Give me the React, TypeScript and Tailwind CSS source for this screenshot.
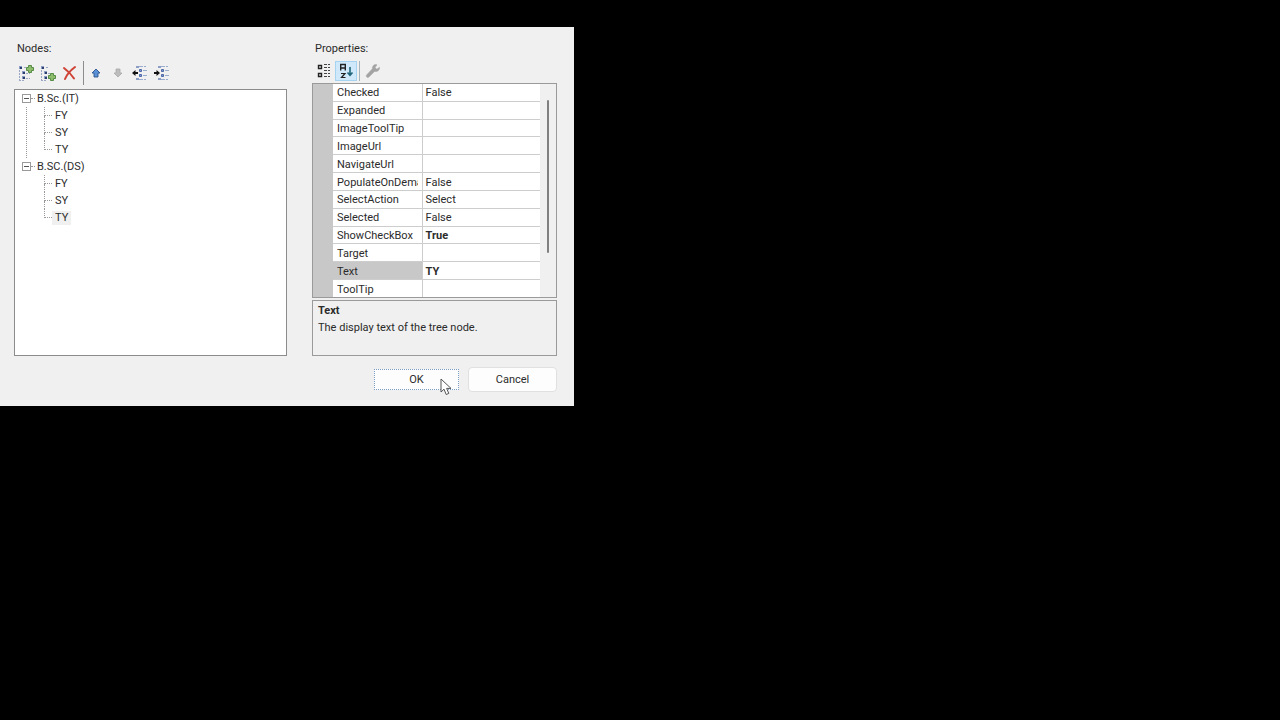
import React from 'react';
import clsx from 'clsx';

interface TreeItem {
  label: string;
  children: string[];
}

interface Property {
  name: string;
  value: string;
  changed?: boolean;
}

const tree: TreeItem[] = [
  { label: 'B.Sc.(IT)', children: ['FY', 'SY', 'TY'] },
  { label: 'B.SC.(DS)', children: ['FY', 'SY', 'TY'] },
];

const properties: Property[] = [
  { name: 'Checked', value: 'False' },
  { name: 'Expanded', value: '' },
  { name: 'ImageToolTip', value: '' },
  { name: 'ImageUrl', value: '' },
  { name: 'NavigateUrl', value: '' },
  { name: 'PopulateOnDemand', value: 'False' },
  { name: 'SelectAction', value: 'Select' },
  { name: 'Selected', value: 'False' },
  { name: 'ShowCheckBox', value: 'True', changed: true },
  { name: 'Target', value: '' },
  { name: 'Text', value: 'TY', changed: true },
  { name: 'ToolTip', value: '' },
];

function NodeRows() {
  return (
    <>
      <path d="M1 1h3v3H1zM4 6h3v3H4zM4 11h3v3H4z" fill="#8b9dc4" />
      <path d="M2 2h2v2H2zM5 7h2v2H5zM5 12h2v2H5z" fill="#2c3f6e" />
      <path d="M1.500 5v10M6 2.500h3M8 8.500h4M8 13.500h4M1 15.500h6" stroke="#9aa8c4" strokeDasharray="2 1" fill="none" />
    </>
  );
}

function AddRootIcon() {
  return (
    <svg width="16" height="16" viewBox="0 0 16 16">
      <NodeRows />
      <path d="M10.500.500h3v2h2v3h-2v2h-3v-2h-2v-3h2z" fill="#8cbc6c" stroke="#568c45" />
    </svg>
  );
}

function AddChildIcon() {
  return (
    <svg width="16" height="16" viewBox="0 0 16 16">
      <NodeRows />
      <path d="M10.500 8.500h3v2h2v3h-2v2h-3v-2h-2v-3h2z" fill="#8cbc6c" stroke="#568c45" />
    </svg>
  );
}

function RemoveIcon() {
  return (
    <svg width="16" height="16" viewBox="0 0 16 16">
      <path d="M2 3c4 3 7 6 10 10.500M13 2C9 5 5 9 3 14" stroke="#cf4236" strokeWidth="2" strokeLinecap="round" fill="none" />
    </svg>
  );
}

function MoveIcon({ down }: { down?: boolean }) {
  return (
    <svg width="16" height="16" viewBox="0 0 16 16">
      {down ? (
        <path d="M6 4h4v4h2l-4 4-4-4h2z" fill="#bdbdbd" stroke="#a8a8a8" strokeWidth="0.8" />
      ) : (
        <path d="M8 4l4 4h-2v4H6V8H4z" fill="#5a91d6" stroke="#2b5592" strokeWidth="0.9" />
      )}
    </svg>
  );
}

function IndentIcon({ right }: { right?: boolean }) {
  return (
    <svg width="16" height="16" viewBox="0 0 16 16">
      <path d="M7 1.500h4M12 1.500h2M11 5.500h4M11 10.500h4M7 14.500h4M12 14.500h2" stroke="#9aabd0" fill="none" />
      <path d="M4 1h3v2H4zM4 13h3v2H4z" fill="#8b9dc4" />
      <path d="M7.500 4.500h2v2h-2zM7.500 9.500h2v2h-2z" fill="#7f97ca" stroke="#4d68a8" />
      <path
        d={right ? 'M0 7h2.500V5L6 8l-3.500 3V9H0z' : 'M6 7H3.500V5L0 8l3.500 3V9H6z'}
        fill="#111"
      />
    </svg>
  );
}

function CategorizedIcon() {
  return (
    <svg width="16" height="16" viewBox="0 0 16 16">
      <path d="M2.500 2.500h3v3h-3zM2.500 10.500h3v3h-3z" stroke="#222" strokeWidth="1.400" fill="none" />
      <path d="M8 1.500h3M12 1.500h2M8 4.500h3M12 4.500h2M8 7.500h3M12 7.500h2M8 10.500h3M12 10.500h2M8 13.500h3M12 13.500h2" stroke="#444" fill="none" />
    </svg>
  );
}

function SortIcon() {
  return (
    <svg width="16" height="16" viewBox="0 0 16 16">
      <path d="M2.700 7.500v-6h4.600v6M2.700 5h4.600" stroke="#222" strokeWidth="1.400" fill="none" />
      <path d="M3 10.500h4L3.500 14.500H7.500" stroke="#222" strokeWidth="1.200" fill="none" />
      <path d="M12 4v8M9.500 9.500L12 12.300l2.500-2.800" stroke="#1f6478" strokeWidth="1.600" fill="none" />
    </svg>
  );
}

function WrenchIcon() {
  return (
    <svg width="16" height="16" viewBox="0 0 16 16">
      <path
        d="M14.500 4.200l-2.600 2-1.900-1.700 2-2.600C9.700.900 7 2.600 7.400 5.800L1.600 11.900c-1.200 1.500.8 3.500 2.300 2.200L9.500 8.400c3.200.7 5.500-1.700 5-4.200z"
        fill="#a3a3a3"
        stroke="#a3a3a3"
        strokeWidth="0.5"
      />
    </svg>
  );
}

interface ToolButtonProps {
  label: string;
  active?: boolean;
  children: React.ReactNode;
}

function ToolButton({ label, active, children }: ToolButtonProps) {
  return (
    <button
      type="button"
      aria-label={label}
      className={clsx(
        'flex h-5 w-[22px] items-center justify-center',
        active && 'border border-[#a5d3f0] bg-[#cfe9fa]'
      )}
    >
      {children}
    </button>
  );
}

function TreeView() {
  return (
    <ul className="flex-1 border border-[#8c8c8c] bg-white pl-[7px]">
      {tree.map((item, index) => {
        const lastRoot = index === tree.length - 1;
        return (
          <li key={item.label}>
            <div className="flex h-[17px] items-center">
              <button
                type="button"
                aria-label={`Collapse ${item.label}`}
                className="flex size-[9px] items-center justify-center border border-[#9a9a9a] bg-white"
              >
                <span className="h-px w-[5px] bg-[#555]" />
              </button>
              <span className="mr-0.5 w-1 border-b border-dotted border-[#999]" />
              <span>{item.label}</span>
            </div>
            <ul className={clsx('ml-1', lastRoot ? 'pl-px' : 'border-l border-dotted border-[#999]')}>
              {item.children.map((child, i) => {
                const last = i === item.children.length - 1;
                return (
                  <li key={child} className="flex h-[17px] items-center pl-[17px]">
                    <span className="flex h-full w-2 flex-col">
                      <span className="h-[9px] border-b border-l border-dotted border-[#999]" />
                      {!last && <span className="h-2 border-l border-dotted border-[#999]" />}
                    </span>
                    <span className={clsx('px-[3px]', last && lastRoot && 'bg-[#f0f0f0]')}>
                      {child}
                    </span>
                  </li>
                );
              })}
            </ul>
          </li>
        );
      })}
    </ul>
  );
}

function PropertyGrid() {
  return (
    <div className="mt-0.5 flex h-[215px] overflow-hidden border border-[#9a9a9a] bg-[#f0f0f0]">
      {/* Gutter */}
      <div className="w-5 shrink-0 bg-[#c8c8c8]" />
      <div className="min-w-0 flex-1 bg-white">
        <table className="h-full w-full table-fixed border-collapse">
          <colgroup>
            <col className="w-[89px]" />
            <col />
          </colgroup>
          <tbody>
            {properties.map((property) => (
              <tr key={property.name} className="border-b border-[#cdcdcd] last:border-b-0">
                <th
                  scope="row"
                  className={clsx(
                    'border-r border-[#cdcdcd] p-0 pt-0.5 pl-1 text-left font-normal',
                    property.name === 'Text' && 'bg-[#c8c8c8]'
                  )}
                >
                  <div className="mr-1 overflow-hidden whitespace-nowrap">{property.name}</div>
                </th>
                <td className={clsx('p-0 pt-0.5 pl-[3px]', property.changed && 'font-bold')}>
                  {property.value}
                </td>
              </tr>
            ))}
          </tbody>
        </table>
      </div>
      {/* Scrollbar */}
      <div className="flex w-4 shrink-0 justify-center pt-4">
        <div className="h-[153px] w-0.5 rounded-full bg-[#808080]" />
      </div>
    </div>
  );
}

function MousePointer() {
  return (
    <svg className="absolute top-2 right-1.5 h-[18px] w-3" viewBox="0 0 12 18">
      <path d="M1 1v13l3-2.800 2.200 5.300 2.600-1.100-2.200-5H11z" fill="#fff" stroke="#555" />
    </svg>
  );
}

export default function App() {
  return (
    <div className="min-h-screen bg-black pt-[27px] font-[Roboto,sans-serif] text-[11px] leading-[14px] text-[#2b2b2b]">
      <div role="dialog" aria-label="TreeView Node Editor" className="w-full max-w-[574px] bg-[#f0f0f0] pt-3.5 pr-[17px] pb-3.5 pl-3.5">
        <div className="flex gap-[25px]">
          {/* Nodes */}
          <section className="flex flex-1 flex-col">
            <h2 className="h-4 pl-[3px] leading-4">Nodes:</h2>
            <div className="my-1 flex h-6 items-center pl-px">
              <ToolButton label="Add a root node"><AddRootIcon /></ToolButton>
              <ToolButton label="Add a child node"><AddChildIcon /></ToolButton>
              <ToolButton label="Remove"><RemoveIcon /></ToolButton>
              <span className="mr-px ml-0.5 h-full w-px bg-[#8c8c8c]" />
              <ToolButton label="Move up"><MoveIcon /></ToolButton>
              <ToolButton label="Move down"><MoveIcon down /></ToolButton>
              <ToolButton label="Outdent"><IndentIcon /></ToolButton>
              <ToolButton label="Indent"><IndentIcon right /></ToolButton>
            </div>
            <TreeView />
          </section>

          {/* Properties */}
          <section className="w-[245px]">
            <h2 className="h-4 pl-[3px] leading-4">Properties:</h2>
            <div className="mt-1 flex h-5 items-center pl-px">
              <ToolButton label="Categorized"><CategorizedIcon /></ToolButton>
              <ToolButton label="Alphabetical" active><SortIcon /></ToolButton>
              <span className="mx-0.5 h-full w-px bg-[#a5b5bd]" />
              <ToolButton label="Property pages"><WrenchIcon /></ToolButton>
            </div>
            <PropertyGrid />
            <div className="mt-0.5 h-14 border border-[#9a9a9a] px-[5px] pt-[3px]">
              <h3 className="font-bold">Text</h3>
              <p className="mt-[3px]">The display text of the tree node.</p>
            </div>
          </section>
        </div>

        {/* Actions */}
        <div className="mt-[11px] flex items-center justify-end gap-[9px]">
          <button type="button" className="relative h-[21px] w-[85px] border border-dotted border-[#7b9cc4] bg-[#fdfdfd]">
            OK
            <MousePointer />
          </button>
          <button type="button" className="h-[25px] w-[89px] rounded-sm border border-[#e0e0e0] bg-[#fdfdfd]">
            Cancel
          </button>
        </div>
      </div>
    </div>
  );
}
